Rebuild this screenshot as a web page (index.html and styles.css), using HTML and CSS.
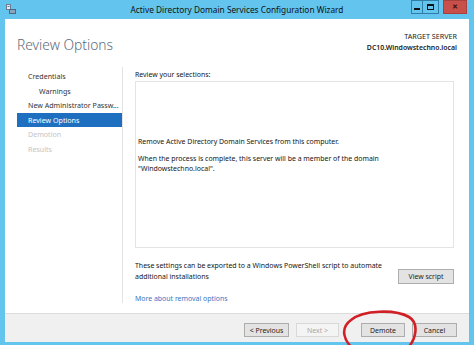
FILE: index.html
```html
<!DOCTYPE html>
<html lang="en">
<head>
    <meta charset="UTF-8">
    <title>Active Directory Domain Services Configuration Wizard</title>
    <link rel="stylesheet" href="styles.css">
</head>
<body>
    <div class="window">
        <div class="titlebar">
            <svg class="app-icon" width="10" height="10" viewBox="0 0 10 10">
                <rect x="0.5" y="0.5" width="4" height="5" fill="#e8eef4" stroke="#6a7d92" stroke-width="1"/>
                <rect x="3.5" y="5.5" width="6" height="4" fill="#8aa4c0" stroke="#4f6680" stroke-width="1"/>
                <rect x="1.5" y="2" width="2" height="1" fill="#6a7d92"/>
            </svg>
            <div class="title">Active Directory Domain Services Configuration Wizard</div>
            <div class="controls">
                <span class="ctl min"></span>
                <span class="ctl max"></span>
                <span class="ctl close">&#x2715;</span>
            </div>
        </div>

        <div class="client">
            <div class="header">
                <h1>Review Options</h1>
                <div class="target">
                    <div>TARGET SERVER</div>
                    <div class="server">DC10.Windowstechno.local</div>
                </div>
            </div>

            <div class="main">
                <ul class="nav">
                    <li>Credentials</li>
                    <li class="sub">Warnings</li>
                    <li>New Administrator Passw...</li>
                    <li class="active">Review Options</li>
                    <li class="disabled">Demotion</li>
                    <li class="disabled">Results</li>
                </ul>

                <div class="content">
                    <p class="caption">Review your selections:</p>
                    <div class="review-box">
                        <p>Remove Active Directory Domain Services from this computer.</p>
                        <p>When the process is complete, this server will be a member of the domain<br>"Windowstechno.local".</p>
                    </div>
                    <div class="export">
                        <p>These settings can be exported to a Windows PowerShell script to automate<br>additional installations</p>
                        <button class="btn script-btn">View script</button>
                    </div>
                    <a class="more" href="#">More about removal options</a>
                </div>
            </div>

            <div class="footer">
                <button class="btn">&lt; Previous</button>
                <button class="btn next" disabled>Next &gt;</button>
                <button class="btn demote">Demote</button>
                <button class="btn">Cancel</button>
            </div>
        </div>

        <svg class="circle-mark" width="90" height="45" viewBox="0 0 90 45">
            <path d="M18 42 C 6 33, 3 20, 14 12 C 26 2, 58 1, 72 9 C 82 15, 80 31, 69 42" fill="none" stroke="#d11f26" stroke-width="2.6" stroke-linecap="round"/>
        </svg>
    </div>
</body>
</html>
```

FILE: styles.css
```css
body {
    margin: 0;
    font-family: "Noto Sans", "Open Sans", sans-serif;
    background-color: #63c5ee;
}

.window {
    position: relative;
    width: 474px;
    height: 345px;
    display: flex;
    flex-direction: column;
    overflow: hidden;
    background-color: #63c5ee;
}

.titlebar {
    height: 19px;
    flex-shrink: 0;
    display: flex;
    align-items: center;
    position: relative;
}

.app-icon {
    margin-left: 6px;
    margin-top: -2px;
}

.title {
    position: absolute;
    left: 0;
    right: 0;
    top: 4px;
    text-align: center;
    font-size: 8.3px;
    color: #111;
}

.controls {
    position: absolute;
    top: 0;
    right: 7px;
    display: flex;
}

.ctl {
    flex-shrink: 0;
    width: 12px;
    height: 14px;
    box-sizing: border-box;
    border: 1px solid #2f7ea8;
    position: relative;
}

.max {
    width: 16px;
    border-left: none;
    margin-right: 4px;
}

.min:after {
    content: "";
    position: absolute;
    left: 2px;
    bottom: 3px;
    width: 6px;
    height: 2px;
    background-color: #111;
}

.max:after {
    content: "";
    position: absolute;
    left: 4px;
    top: 3px;
    width: 7px;
    height: 6px;
    box-sizing: border-box;
    border: 1px solid #111;
    border-top-width: 2px;
}

.close {
    width: 24px;
    background-color: #c9504a;
    border-color: #a8413c;
    color: #3a0f0d;
    font-size: 7px;
    font-weight: bold;
    text-align: center;
    line-height: 12px;
}

.client {
    margin: 0 5px;
    height: 323px;
    flex-shrink: 0;
    background-color: #fff;
    display: flex;
    flex-direction: column;
    color: #151515;
}

.header {
    height: 46px;
    flex-shrink: 0;
    display: flex;
    justify-content: space-between;
    padding: 0 12px;
}

h1 {
    margin: 0;
    padding-top: 17px;
    font-size: 13.8px;
    line-height: 18px;
    font-weight: 300;
    color: #5b6b7b;
}

.target {
    padding-top: 11px;
    text-align: right;
    font-size: 7.2px;
    line-height: 12px;
    color: #222;
}

.server {
    font-size: 6.9px;
    font-weight: 600;
}

.main {
    flex: 1;
    min-height: 0;
    display: flex;
}

.nav {
    list-style: none;
    margin: 2px 0 10px 12px;
    padding: 2px 0 0;
    width: 105px;
    border-right: 1px solid #e3e3e3;
    font-size: 7.1px;
    color: #333;
}

.nav li {
    height: 14.6px;
    line-height: 14.6px;
    padding-left: 11px;
    white-space: nowrap;
}

.nav .sub {
    padding-left: 22px;
}

.nav .active {
    background-color: #1f6fc1;
    color: #fff;
}

.nav .disabled {
    color: #c4c4c4;
}

.content {
    flex: 1;
    padding: 5px 15px 0 12px;
    font-size: 6.95px;
}

.content p {
    margin: 0;
}

.caption {
    line-height: 10px;
}

.review-box {
    margin-top: 1px;
    height: 167px;
    box-sizing: border-box;
    border: 1px solid #e4e4e4;
    padding: 55px 2px 0;
    line-height: 9.5px;
}

.review-box p + p {
    margin-top: 7.5px;
}

.export {
    display: flex;
    justify-content: space-between;
    align-items: flex-start;
    margin-top: 11.5px;
    line-height: 11px;
}

.export p {
    flex: none;
    white-space: nowrap;
}

.btn {
    flex: none;
    font-family: inherit;
    font-size: 6.95px;
    height: 14px;
    width: 45px;
    padding: 0;
    background-color: #e3e3e3;
    border: 1px solid #adadad;
    color: #1e1e1e;
}

.btn:disabled {
    background-color: #f4f4f4;
    border-color: #d9d9d9;
    color: #a8a8a8;
}

.script-btn {
    width: 56px;
    height: 15px;
    margin-top: 9.5px;
}

.more {
    display: block;
    margin-top: 10px;
    line-height: 10px;
    color: #3a76c4;
    text-decoration: none;
}

.footer {
    height: 29px;
    flex-shrink: 0;
    box-sizing: border-box;
    border-top: 1px solid #dcdcdc;
    background-color: #f0f0f0;
    display: flex;
    justify-content: flex-end;
    align-items: flex-start;
    gap: 7px;
    padding: 9px 12px 0 0;
}

.footer .next {
    width: 43px;
}

.footer .demote {
    margin-left: 15px;
    width: 44px;
}

.circle-mark {
    position: absolute;
    left: 337px;
    top: 308px;
}
```
